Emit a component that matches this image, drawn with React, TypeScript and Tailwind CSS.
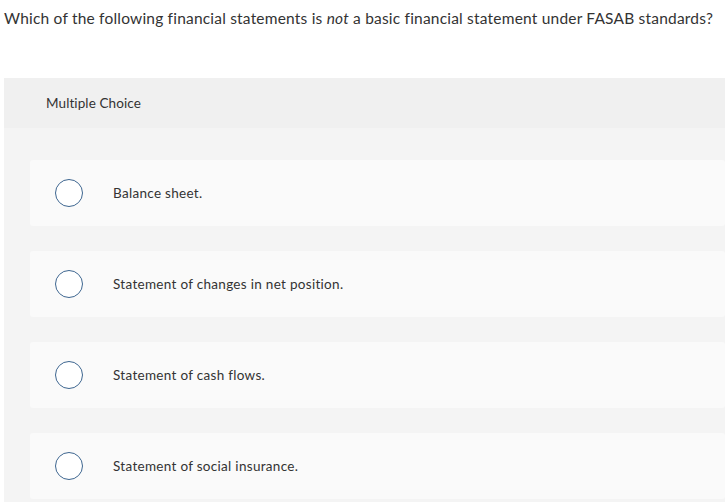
import React from "react";

const options = [
  "Balance sheet.",
  "Statement of changes in net position.",
  "Statement of cash flows.",
  "Statement of social insurance.",
];

export default function App() {
  return (
    <div className="w-[725px] h-[503px] bg-white overflow-hidden text-[#333]" style={{ fontFamily: "Lato, 'Open Sans', sans-serif" }}>
      <div className="pl-[4px] pt-[8px] h-[78px] text-[15.5px] leading-[20px] tracking-[0.2px]">
        Which of the following financial statements is <em>not</em> a basic financial statement under FASAB standards?
      </div>
      <div className="ml-[4px] bg-[#f4f4f4] h-[424px]">
        <div className="h-[50px] bg-[#f0f0f0] flex items-center pl-[42px] text-[13.5px] tracking-[0.1px]">Multiple Choice</div>
        <div className="pt-[32px] pl-[26px] flex flex-col gap-[25px]">
          {options.map((o) => (
            <div key={o} className="h-[66px] bg-[#fafafa] rounded-[3px] flex items-center">
              <div className="ml-[25px] w-[28px] h-[28px] rounded-full border-[1.5px] border-[#3e6690] bg-white shrink-0" />
              <div className="ml-[30px] text-[13.5px] tracking-[0.3px]">{o}</div>
            </div>
          ))}
        </div>
      </div>
    </div>
  );
}
